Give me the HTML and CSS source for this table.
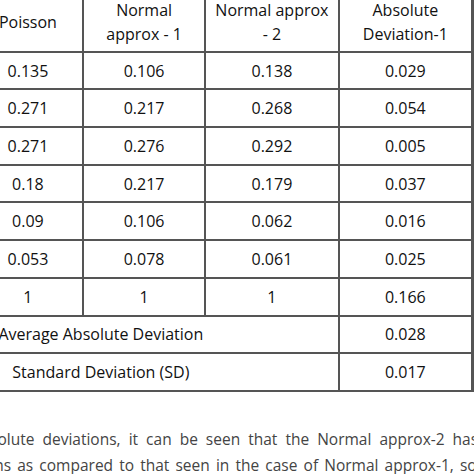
FILE: index.html
```html
<!DOCTYPE html>
<html lang="en">
<head>
    <meta charset="UTF-8">
    <meta name="viewport" content="width=device-width, initial-scale=1.0">
    <title>Poisson vs Normal approximation</title>
    <link rel="stylesheet" href="styles.css">
</head>
<body>
    <table class="prob-table">
        <tr class="head">
            <th class="c0">x</th>
            <th class="c1">Poisson</th>
            <th class="c2">Normal<br>approx - 1</th>
            <th class="c3">Normal approx<br>- 2</th>
            <th class="c4">Absolute<br>Deviation-1</th>
        </tr>
        <tr><td>0</td><td>0.135</td><td>0.106</td><td>0.138</td><td>0.029</td></tr>
        <tr><td>1</td><td>0.271</td><td>0.217</td><td>0.268</td><td>0.054</td></tr>
        <tr><td>2</td><td>0.271</td><td>0.276</td><td>0.292</td><td>0.005</td></tr>
        <tr><td>3</td><td>0.18</td><td>0.217</td><td>0.179</td><td>0.037</td></tr>
        <tr><td>4</td><td>0.09</td><td>0.106</td><td>0.062</td><td>0.016</td></tr>
        <tr><td>&ge;5</td><td>0.053</td><td>0.078</td><td>0.061</td><td>0.025</td></tr>
        <tr><td>Total</td><td>1</td><td>1</td><td>1</td><td>0.166</td></tr>
        <tr><td colspan="4">Average Absolute Deviation</td><td>0.028</td></tr>
        <tr><td colspan="4">Standard Deviation (SD)</td><td>0.017</td></tr>
    </table>

    <div class="note">
        <div class="line first">absolute deviations, it can be seen that the Normal approx-2 has</div>
        <div class="line second">deviations as compared to that seen in the case of Normal approx-1, so</div>
    </div>
</body>
</html>
```

FILE: styles.css
```css
body {
    margin: 0;
    padding: 0;
    background: #fff;
    font-family: "Open Sans", sans-serif;
    overflow: hidden;
    width: 474px;
    height: 474px;
}
.prob-table {
    border-collapse: collapse;
    margin-left: -138px;
    margin-top: -8px;
    table-layout: fixed;
    color: #111;
    font-size: 16px;
}
.prob-table th,
.prob-table td {
    border: 2px solid #555;
    text-align: center;
    padding: 0;
    font-weight: normal;
}
.prob-table tr {
    height: 37.7px;
}
.prob-table tr.head {
    height: 58.7px;
}
.prob-table th {
    line-height: 24px;
}
.prob-table tr > :last-child {
    border-right-width: 3px;
}
.c0 { width: 110px; }
.c1 { width: 110px; }
.c2 { width: 122px; }
.c3 { width: 134px; }
.c4 { width: 133px; }

.note {
    margin-top: 34px;
    color: #444;
    font-size: 15.5px;
    line-height: 26px;
}
.note .line {
    white-space: nowrap;
}
.note .first {
    margin-left: -28px;
    word-spacing: 4px;
}
.note .second {
    margin-left: -63px;
    word-spacing: 2.1px;
}
```
